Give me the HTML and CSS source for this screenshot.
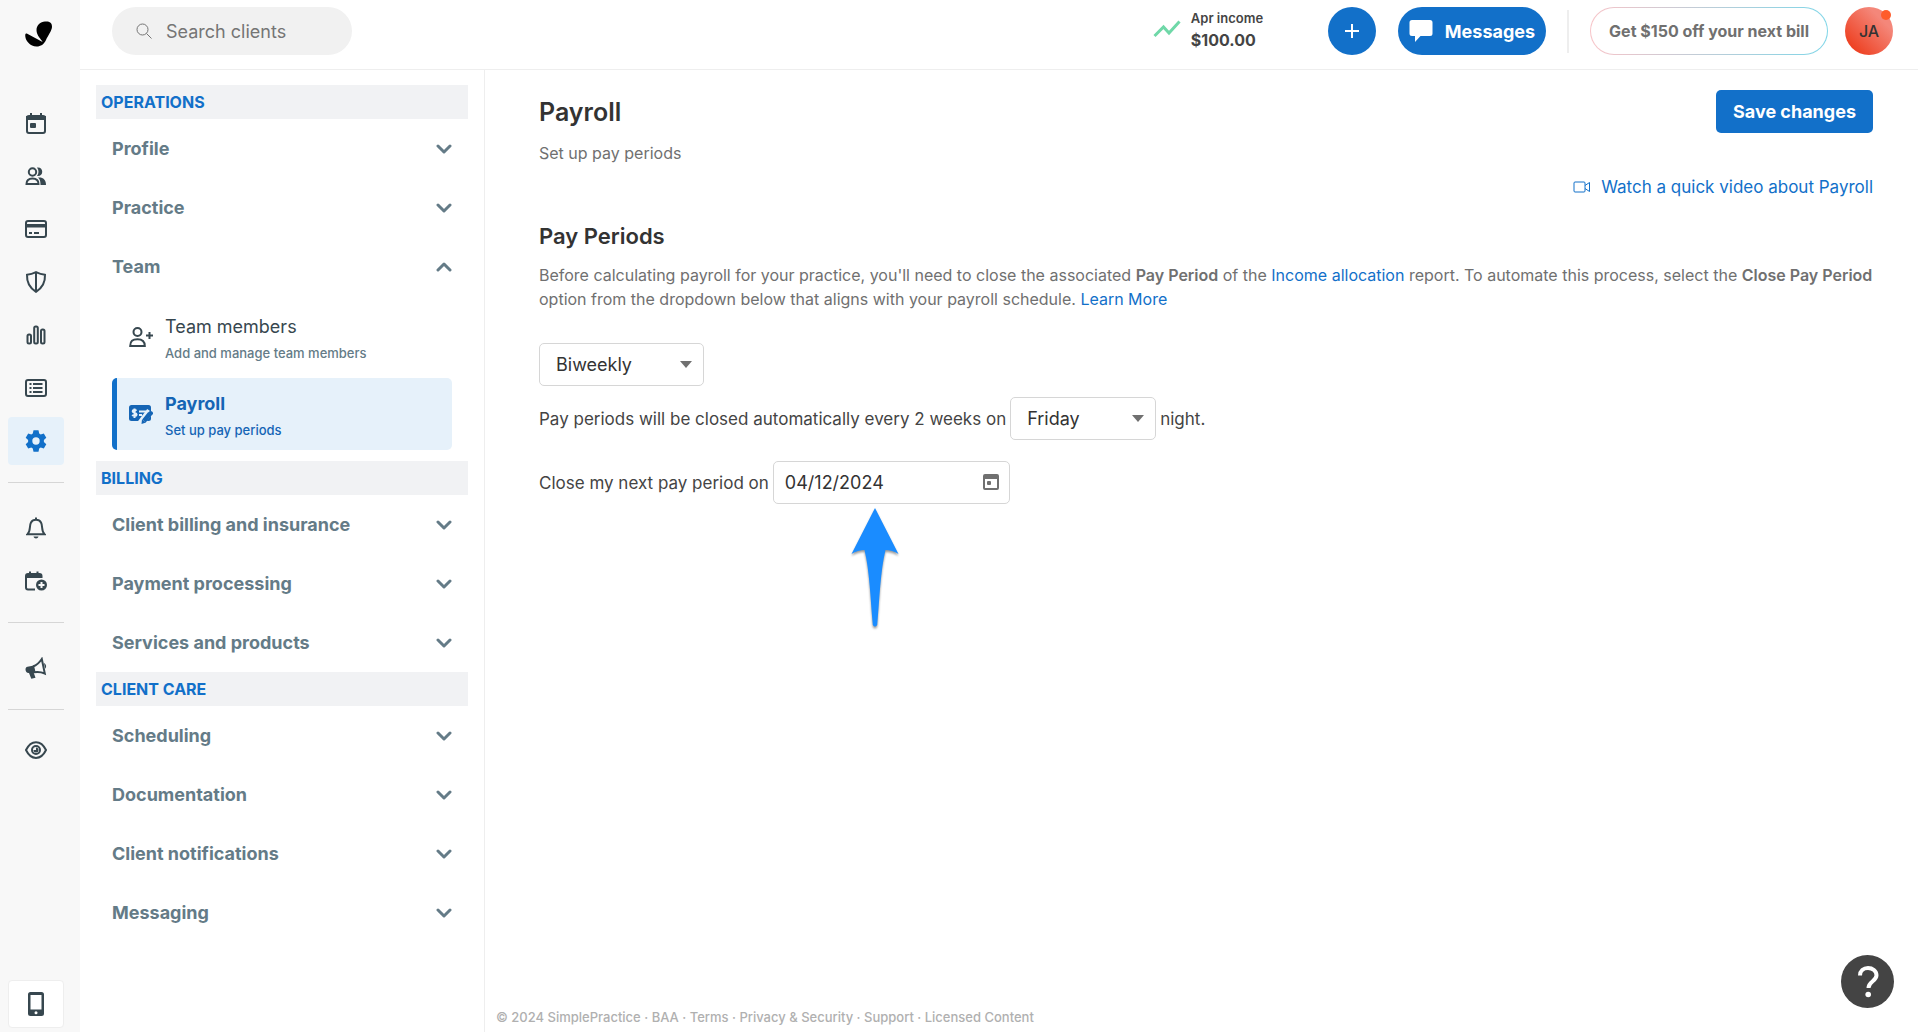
FILE: index.html
```html
<!DOCTYPE html>
<html lang="en">
<head>
    <meta charset="UTF-8">
    <meta name="viewport" content="width=device-width, initial-scale=1.0">
    <title>Payroll</title>
    <link rel="stylesheet" href="styles.css">
</head>
<body>

<nav class="rail">
    <a href="#" class="logo" aria-label="Home">
        <svg width="28" height="26" viewBox="0 0 28 26"><path d="M20 .5C24 0 27.300 1.500 27 6c-.3 4-4 8.500-6 13-2 4.500-5.500 6.600-9.500 6.500C5 25.300.8 20 .3 15.500.1 13 .5 12 1.800 12.600L17.600 21c-1.500-3-6.100-6.500-6.100-12C11.500 4 15.500 1 20 .5z"/></svg>
    </a>
    <a href="#" class="rail-link" aria-label="Calendar">
        <svg width="22" height="24" viewBox="0 0 22 24"><rect x="2" y="5" width="18" height="17" rx="2"/><path class="fill" d="M1 5h20v4H1z"/><path d="M6 2v3M16 2v3"/><rect class="fill" x="5" y="12" width="6" height="5" rx="1"/></svg>
    </a>
    <a href="#" class="rail-link" aria-label="Clients">
        <svg width="22" height="20" viewBox="0 0 22 20"><circle cx="7.500" cy="6" r="3.700"/><path d="M1.500 18c0-4 2-5.500 6-5.500s6 1.500 6 5.500z"/><path class="fill" d="M12 1.500c7-1 7 9.500 0 8.500 2-2.500 2-6 0-8.500zM13 11.500c5-.5 8 2 8 7.500h-5.500c0-4-.5-5.500-2.500-7.500z"/></svg>
    </a>
    <a href="#" class="rail-link" aria-label="Billing">
        <svg width="22" height="18" viewBox="0 0 22 18"><rect x="1" y="1" width="20" height="16" rx="2"/><path class="fill" d="M1 4h20v3.500H1z"/><path d="M4 13h3M9 13h5"/></svg>
    </a>
    <a href="#" class="rail-link" aria-label="Insurance">
        <svg width="22" height="22" viewBox="0 0 22 22"><path d="M11 1.200c3 1.500 5.500 2.300 9 2.600.3 7-1.500 12.500-9 17-7.500-4.500-9.300-10-9-17 3.500-.3 6-1.100 9-2.600zM11 1.200v19.600"/></svg>
    </a>
    <a href="#" class="rail-link" aria-label="Analytics">
        <svg width="20" height="20" viewBox="0 0 20 20"><rect x="1.500" y="9.500" width="3.500" height="9" rx="1.500"/><rect x="8.200" y="1.500" width="3.600" height="17" rx="1.500"/><rect x="15" y="4.500" width="3.500" height="14" rx="1.500"/></svg>
    </a>
    <a href="#" class="rail-link" aria-label="Activity">
        <svg width="22" height="18" viewBox="0 0 22 18"><rect x="1" y="1" width="20" height="16" rx="2"/><path d="M4.500 5h2M8 5h9.500M4.500 9h2M8 9h9.500M4.500 13h2M8 13h9.500"/></svg>
    </a>
    <a href="#" class="rail-link active" aria-label="Settings">
        <svg width="22" height="22" viewBox="0 0 22 22"><path class="fill" fill-rule="evenodd" d="M8.500.3h5l.7 3.200 1.500.9 3.100-1 2.500 4.300-2.400 2.300v2l2.400 2.300-2.500 4.300-3.100-1-1.500.9-.7 3.200h-5l-.7-3.200-1.500-.9-3.100 1L.7 14.300 3.100 12v-2L.7 7.700l2.500-4.300 3.100 1 1.500-.9zM11 7.300a3.700 3.700 0 1 0 0 7.400 3.700 3.700 0 0 0 0-7.400z"/></svg>
    </a>
    <hr>
    <a href="#" class="rail-link after-line" aria-label="Notifications">
        <svg width="20" height="22" viewBox="0 0 20 22"><path d="M1.500 17.200C5 14 3 9 5 5.500 6 3.700 8 2.800 10 2.800s4 .9 5 2.700c2 3.500 0 8.500 3.500 11.700zM10 .5v2"/><path class="fill" d="M7.500 19.500h5c-.5 2.500-4.500 2.500-5 0z"/></svg>
    </a>
    <a href="#" class="rail-link" aria-label="Requests">
        <svg width="22" height="20" viewBox="0 0 22 20"><path d="M10 18.500H3a2 2 0 0 1-2-2V5a2 2 0 0 1 2-2h11.500a2 2 0 0 1 2 2v2M5 .5V3M12.500.5V3"/><path class="fill" d="M1 3.500h16V7H1z"/><circle class="fill" cx="16.500" cy="14" r="5.500"/><path class="light" d="M13.500 14h6M16.500 11v6"/></svg>
    </a>
    <hr>
    <a href="#" class="rail-link after-line" aria-label="Marketing">
        <svg width="22" height="22" viewBox="0 0 22 22"><path d="M8 9.500c4-1.500 6.500-4 8.800-7.500l3 14.500c-3.500-1.500-6.800-2-11-1.200"/><path class="fill" d="M19 6c2.300 1.200 2.800 4 1 5.800z"/><path class="fill" d="M2.500 9.800 9 8.500l1.600 7-1.800.5 1.700 4.700-4.200 1.100-2.300-5.800C.5 16.500-1 10.500 2.500 9.800z"/></svg>
    </a>
    <hr>
    <a href="#" class="rail-link" aria-label="Preview">
        <svg width="22" height="18" viewBox="0 0 22 18"><path d="M1 9c5-10.500 15-10.500 20 0-5 10.500-15 10.500-20 0z"/><circle cx="11" cy="9" r="4"/><path class="fill" d="M11 6.500A2.500 2.500 0 1 1 8.500 9H11z"/></svg>
    </a>
    <a href="#" class="rail-link phone" aria-label="Mobile app">
        <svg width="18" height="26" viewBox="0 0 18 26"><path class="fill" fill-rule="evenodd" d="M3.500 1h11A2.500 2.500 0 0 1 17 3.500v19a2.500 2.500 0 0 1-2.500 2.500h-11A2.500 2.500 0 0 1 1 22.500v-19A2.500 2.500 0 0 1 3.500 1zM3.500 4v14.500h11V4z"/><circle cx="9" cy="21.700" r="1.500" fill="#fff" stroke="none"/></svg>
    </a>
</nav>

<div class="page">
    <header class="topbar">
        <label class="search">
            <svg width="16" height="16" viewBox="0 0 16 16"><circle cx="6.500" cy="6.500" r="5.500"/><path d="m10.500 10.500 5 5"/></svg>
            <input type="text" placeholder="Search clients" aria-label="Search clients">
        </label>
        <a href="#" class="income">
            <svg width="28" height="18" viewBox="0 0 28 18"><path d="M1.500 16 10.500 7l5.500 6L26.500 1.500"/></svg>
            <span><small>Apr income</small><b>$100.00</b></span>
        </a>
        <button class="btn-round" aria-label="Create">
            <svg width="14" height="14" viewBox="0 0 14 14"><path d="M7 0v14M0 7h14"/></svg>
        </button>
        <button class="btn-messages">
            <svg width="24" height="24" viewBox="0 0 24 24"><path d="M3 1h18a2.500 2.500 0 0 1 2.500 2.500v11A2.500 2.500 0 0 1 21 17h-9.500l-5.500 6v-6H3A2.500 2.500 0 0 1 .5 14.500v-11A2.500 2.500 0 0 1 3 1z"/></svg>
            Messages
        </button>
        <span class="separator"></span>
        <button class="btn-offer">Get $150 off your next bill</button>
        <button class="avatar">JA<span class="dot"></span></button>
    </header>

    <div class="columns">
        <aside class="settings">
            <h2 class="section">OPERATIONS</h2>
            <button class="group">Profile<svg width="16" height="10" viewBox="0 0 16 10"><path d="m2 2 6 6 6-6"/></svg></button>
            <button class="group">Practice<svg width="16" height="10" viewBox="0 0 16 10"><path d="m2 2 6 6 6-6"/></svg></button>
            <button class="group" aria-expanded="true">Team<svg width="16" height="10" viewBox="0 0 16 10"><path d="m2 8 6-6 6 6"/></svg></button>
            <div class="subitems">
                <a href="#" class="subitem">
                    <svg width="24" height="22" viewBox="0 0 24 22"><circle cx="8.500" cy="6" r="4"/><path d="M1.200 20c0-5 2.300-6.800 7.300-6.800s7.300 1.800 7.300 6.800z"/><path d="M20.500 6v7M17 9.500h7"/></svg>
                    <span><strong>Team members</strong><small>Add and manage team members</small></span>
                </a>
                <a href="#" class="subitem current">
                    <svg width="24" height="20" viewBox="0 0 24 20"><rect class="fill" x="0" y="1" width="22" height="16" rx="2.500"/><path class="light" d="M7.500 6.800C6 5.300 3.500 5.800 3.700 7.300c.2 1.600 3.900 1.200 3.900 3.200 0 1.700-3 1.900-4.400.4M5.500 4.500v9.500M10 7.500h7M10 11h3"/><path d="M11.500 19.500 21 7" stroke="#e6f1fa" stroke-width="7"/><path d="M15 17 21 9.500" stroke-width="4.500"/><path class="fill" d="m13 15.500 4 3L12.500 20zM20 7.500c2-1.500 4.500.3 4 2.500l-1.500 1.500-3-2.500z"/></svg>
                    <span><strong>Payroll</strong><small>Set up pay periods</small></span>
                </a>
            </div>
            <h2 class="section">BILLING</h2>
            <button class="group">Client billing and insurance<svg width="16" height="10" viewBox="0 0 16 10"><path d="m2 2 6 6 6-6"/></svg></button>
            <button class="group">Payment processing<svg width="16" height="10" viewBox="0 0 16 10"><path d="m2 2 6 6 6-6"/></svg></button>
            <button class="group">Services and products<svg width="16" height="10" viewBox="0 0 16 10"><path d="m2 2 6 6 6-6"/></svg></button>
            <h2 class="section">CLIENT CARE</h2>
            <button class="group">Scheduling<svg width="16" height="10" viewBox="0 0 16 10"><path d="m2 2 6 6 6-6"/></svg></button>
            <button class="group">Documentation<svg width="16" height="10" viewBox="0 0 16 10"><path d="m2 2 6 6 6-6"/></svg></button>
            <button class="group">Client notifications<svg width="16" height="10" viewBox="0 0 16 10"><path d="m2 2 6 6 6-6"/></svg></button>
            <button class="group">Messaging<svg width="16" height="10" viewBox="0 0 16 10"><path d="m2 2 6 6 6-6"/></svg></button>
        </aside>

        <div class="content">
            <main>
                <div class="title-row">
                    <h1>Payroll</h1>
                    <button class="btn-save">Save changes</button>
                </div>
                <p class="subtitle">Set up pay periods</p>
                <a href="#" class="video">
                    <svg width="18" height="12" viewBox="0 0 18 12"><rect x="1" y="1" width="11" height="10" rx="1"/><path d="M12 4.500 16.500 1.500v9L12 7.500"/></svg>
                    Watch a quick video about Payroll
                </a>
                <h3>Pay Periods</h3>
                <p class="intro">Before calculating payroll for your practice, you'll need to close the associated <b>Pay Period</b> of the <a href="#">Income allocation</a> report. To automate this process, select the <b>Close Pay Period</b> option from the dropdown below that aligns with your payroll schedule. <a href="#">Learn More</a></p>

                <form>
                    <div class="select-box frequency">
                        <select aria-label="Pay period frequency"><option>Biweekly</option><option>Monthly</option></select>
                    </div>
                    <div class="row">
                        <label for="day">Pay periods will be closed automatically every 2 weeks on</label>
                        <div class="select-box day">
                            <select id="day"><option>Friday</option><option>Saturday</option></select>
                        </div>
                        <span>night.</span>
                    </div>
                    <div class="row">
                        <label for="date">Close my next pay period on</label>
                        <div class="date-box">
                            <input type="text" id="date" value="04/12/2024">
                            <svg class="date-icon" width="18" height="18" viewBox="0 0 18 18"><path fill-rule="evenodd" d="M3 1h12a2 2 0 0 1 2 2v12a2 2 0 0 1-2 2H3a2 2 0 0 1-2-2V3a2 2 0 0 1 2-2zM3 6v9h12V6z"/><rect x="5" y="8" width="4" height="4" rx="1"/></svg>
                            <svg class="pointer" width="50" height="124" viewBox="0 0 50 124"><path d="M25 1 48.500 47c-4-2.500-9-4-13-4C30.500 63 29.500 92 27.200 118q-2.200 3-4.400 0C20.500 92 19.500 63 14.500 43c-4 0-9 1.500-13 4z"/></svg>
                        </div>
                    </div>
                </form>
            </main>
            <footer>© 2024 SimplePractice · <a href="#">BAA</a> · <a href="#">Terms</a> · <a href="#">Privacy &amp; Security</a> · <a href="#">Support</a> · <a href="#">Licensed Content</a></footer>
        </div>
    </div>
</div>

<button class="help" aria-label="Help">
    <svg width="24" height="34" viewBox="0 0 24 34"><path d="M4 10.500c0-4.500 3.500-7.500 8-7.500s8.500 2.800 8.500 7.300c0 6-8 6-8 12.700"/><circle cx="12.200" cy="29.500" r="2.800"/></svg>
</button>

</body>
</html>
```

FILE: styles.css
```css
* {
    box-sizing: border-box;
    margin: 0;
    padding: 0;
}

body {
    display: flex;
    min-height: 100vh;
    background: #fff;
    color: #444;
    font-family: Inter, "Liberation Sans", sans-serif;
    font-size: 16px;
}

a {
    color: #1270c9;
    text-decoration: none;
}

button,
input,
select {
    font-family: inherit;
    border: none;
    background: none;
}

button {
    cursor: pointer;
}

svg {
    flex: none;
}

/* icon rail */
.rail {
    display: flex;
    flex-direction: column;
    gap: 5px;
    width: 80px;
    padding: 21px 16px 4px 8px;
    background: #f8f8f8;
}

.logo {
    height: 73px;
    padding-left: 17px;
}

.rail-link {
    display: flex;
    align-items: center;
    justify-content: center;
    height: 48px;
    border-radius: 4px;
}

.rail-link svg {
    fill: none;
    stroke: #37474f;
    stroke-width: 2;
}

.rail-link .fill {
    fill: #37474f;
    stroke: none;
}

.rail-link .light {
    stroke: #f8f8f8;
    stroke-width: 2;
}

.rail-link.active {
    background: #e6f1fa;
}

.rail-link.active .fill {
    fill: #1270c9;
}

.rail hr {
    height: 1px;
    margin: 12px 0 11px;
    border: none;
    background: #d6d6d6;
}

.after-line {
    margin-top: 5px;
}

.rail .phone {
    margin-top: auto;
    background: #fff;
    border: 1px solid #eee;
}

/* top bar */
.page {
    display: flex;
    flex-direction: column;
    flex: 1;
    min-width: 0;
}

.topbar {
    display: flex;
    align-items: flex-start;
    height: 70px;
    padding: 7px 25px 0 32px;
    border-bottom: 1px solid #eee;
}

.search {
    display: flex;
    align-items: center;
    gap: 14px;
    width: 240px;
    height: 48px;
    margin-right: auto;
    padding: 0 24px;
    border-radius: 24px;
    background: #f1f1f1;
}

.search svg {
    fill: none;
    stroke: #757575;
}

.search input {
    width: 100%;
    outline: none;
    font-size: 18px;
}

.search input::placeholder {
    color: #757575;
}

.income {
    display: flex;
    align-items: center;
    gap: 10px;
    width: 175px;
    color: #444;
}

.income svg {
    fill: none;
    stroke: #6fd8a8;
    stroke-width: 3;
}

.income small {
    display: block;
    font-size: 13px;
    font-weight: 600;
    line-height: 22px;
}

.income b {
    font-size: 16px;
    font-weight: 700;
    line-height: 22px;
}

.btn-round {
    width: 48px;
    height: 48px;
    border-radius: 50%;
    background: #1270c9;
}

.btn-round svg {
    display: block;
    margin: 0 auto;
    stroke: #fff;
    stroke-width: 2;
}

.btn-messages {
    display: flex;
    align-items: center;
    gap: 12px;
    height: 48px;
    margin-left: 22px;
    padding: 0 11px;
    border-radius: 24px;
    background: #1270c9;
    color: #fff;
    font-size: 18px;
    font-weight: 700;
}

.btn-messages svg {
    fill: #fff;
}

.separator {
    width: 2px;
    height: 43px;
    margin: 3px 21px 0;
    background: #eee;
}

.btn-offer {
    height: 48px;
    padding: 0 18px;
    border: 1px solid transparent;
    border-radius: 24px;
    background: linear-gradient(#fff, #fff) padding-box, linear-gradient(90deg, #f8c4c8, #7fd6e8) border-box;
    color: #707070;
    font-size: 16px;
    font-weight: 700;
}

.avatar {
    position: relative;
    width: 48px;
    height: 48px;
    margin-left: 17px;
    border-radius: 50%;
    background: linear-gradient(45deg, #ec2f0c, #f4877a 75%);
    color: #333;
    font-size: 16px;
    font-weight: 500;
}

.dot {
    position: absolute;
    top: 3px;
    right: 2px;
    width: 10px;
    height: 10px;
    border-radius: 50%;
    background: #ff5c2b;
}

.columns {
    display: flex;
    flex: 1;
}

/* settings menu */
.settings {
    width: 405px;
    padding: 15px 16px;
    border-right: 1px solid #eee;
}

.section {
    height: 34px;
    padding-left: 5px;
    background: #f1f2f4;
    color: #1270c9;
    font-size: 16px;
    font-weight: 700;
    line-height: 34px;
}

.group {
    display: flex;
    align-items: center;
    justify-content: space-between;
    width: 100%;
    height: 59px;
    padding: 0 16px;
    color: #647b87;
    font-size: 18px;
    font-weight: 700;
}

.group svg {
    fill: none;
    stroke: #647b87;
    stroke-width: 3;
    stroke-linecap: round;
    stroke-linejoin: round;
}

.subitems {
    display: flex;
    flex-direction: column;
    gap: 5px;
    padding: 5px 16px 11px;
}

.subitem {
    display: flex;
    align-items: center;
    gap: 12px;
    height: 72px;
    padding-left: 12px;
    border-left: 5px solid transparent;
    border-radius: 5px;
    color: #37474f;
}

.subitem svg {
    fill: none;
    stroke: #37474f;
    stroke-width: 2;
}

.subitem span {
    padding-top: 6px;
}

.subitem strong {
    display: block;
    font-size: 18px;
    font-weight: 400;
    line-height: 27px;
}

.subitem small {
    display: block;
    color: #647b87;
    font-size: 13px;
    font-weight: 500;
    line-height: 27px;
}

.subitem.current {
    border-left-color: #1270c9;
    background: #e6f1fa;
    color: #1565b5;
}

.subitem.current svg {
    stroke: #1565b5;
}

.subitem.current .fill {
    fill: #1565b5;
    stroke: none;
}

.subitem.current .light {
    stroke: #e6f1fa;
}

.subitem.current strong {
    font-weight: 700;
}

.subitem.current small {
    color: #1565b5;
}

/* payroll page */
.content {
    display: flex;
    flex-direction: column;
    flex: 1;
    min-width: 0;
}

main {
    flex: 1;
    padding: 20px 45px 0 54px;
}

.title-row {
    display: flex;
    align-items: center;
    justify-content: space-between;
}

h1 {
    color: #333;
    font-size: 25px;
    font-weight: 600;
}

.btn-save {
    height: 43px;
    padding: 0 17px;
    border-radius: 5px;
    background: #1270c9;
    color: #fff;
    font-size: 18px;
    font-weight: 700;
}

.subtitle {
    margin-top: 8px;
    color: #707070;
    line-height: 24px;
}

.video {
    display: flex;
    align-items: center;
    justify-content: flex-end;
    gap: 10px;
    margin-top: 10px;
    font-size: 17px;
    line-height: 24px;
}

.video svg {
    fill: none;
    stroke: #1270c9;
}

h3 {
    margin-top: 22px;
    color: #333;
    font-size: 22px;
    font-weight: 600;
    line-height: 30px;
}

.intro {
    margin-top: 12px;
    color: #707070;
    line-height: 24px;
}

.intro b {
    font-weight: 600;
}

form {
    margin-top: 32px;
    font-size: 17px;
}

.select-box {
    position: relative;
    height: 43px;
}

/* drop-down arrow */
.select-box::after {
    content: "";
    position: absolute;
    top: 18px;
    right: 12px;
    border: 6px solid transparent;
    border-top: 7px solid #707070;
    border-bottom: none;
    pointer-events: none;
}

.frequency {
    width: 165px;
}

.day {
    width: 146px;
}

select,
.date-box input {
    width: 100%;
    height: 43px;
    padding: 0 16px;
    border: 1px solid #d6d6d6;
    border-radius: 5px;
    background: #fff;
    color: #333;
    font-size: 18px;
    appearance: none;
}

.row {
    display: flex;
    align-items: center;
    gap: 4px;
    margin-top: 11px;
}

.row + .row {
    margin-top: 21px;
}

.date-box {
    position: relative;
    width: 237px;
}

.date-box input {
    padding: 0 11px;
}

.date-icon {
    position: absolute;
    top: 12px;
    right: 10px;
    fill: #707070;
}

/* blue arrow under the date box */
.pointer {
    position: absolute;
    top: 46px;
    left: 77px;
    fill: #1a8cff;
    filter: drop-shadow(0 2px 1px rgba(0, 0, 0, 0.4));
}

footer {
    padding: 0 11px 5px;
    color: #b0b0b0;
    font-size: 13px;
    font-weight: 500;
    line-height: 20px;
}

footer a {
    color: #b0b0b0;
}

.help {
    position: fixed;
    right: 24px;
    bottom: 24px;
    width: 53px;
    height: 53px;
    border-radius: 50%;
    background: #444;
}

.help svg {
    display: block;
    margin: 0 auto;
    fill: none;
    stroke: #fff;
    stroke-width: 4;
}

.help circle {
    fill: #fff;
    stroke: none;
}
```
